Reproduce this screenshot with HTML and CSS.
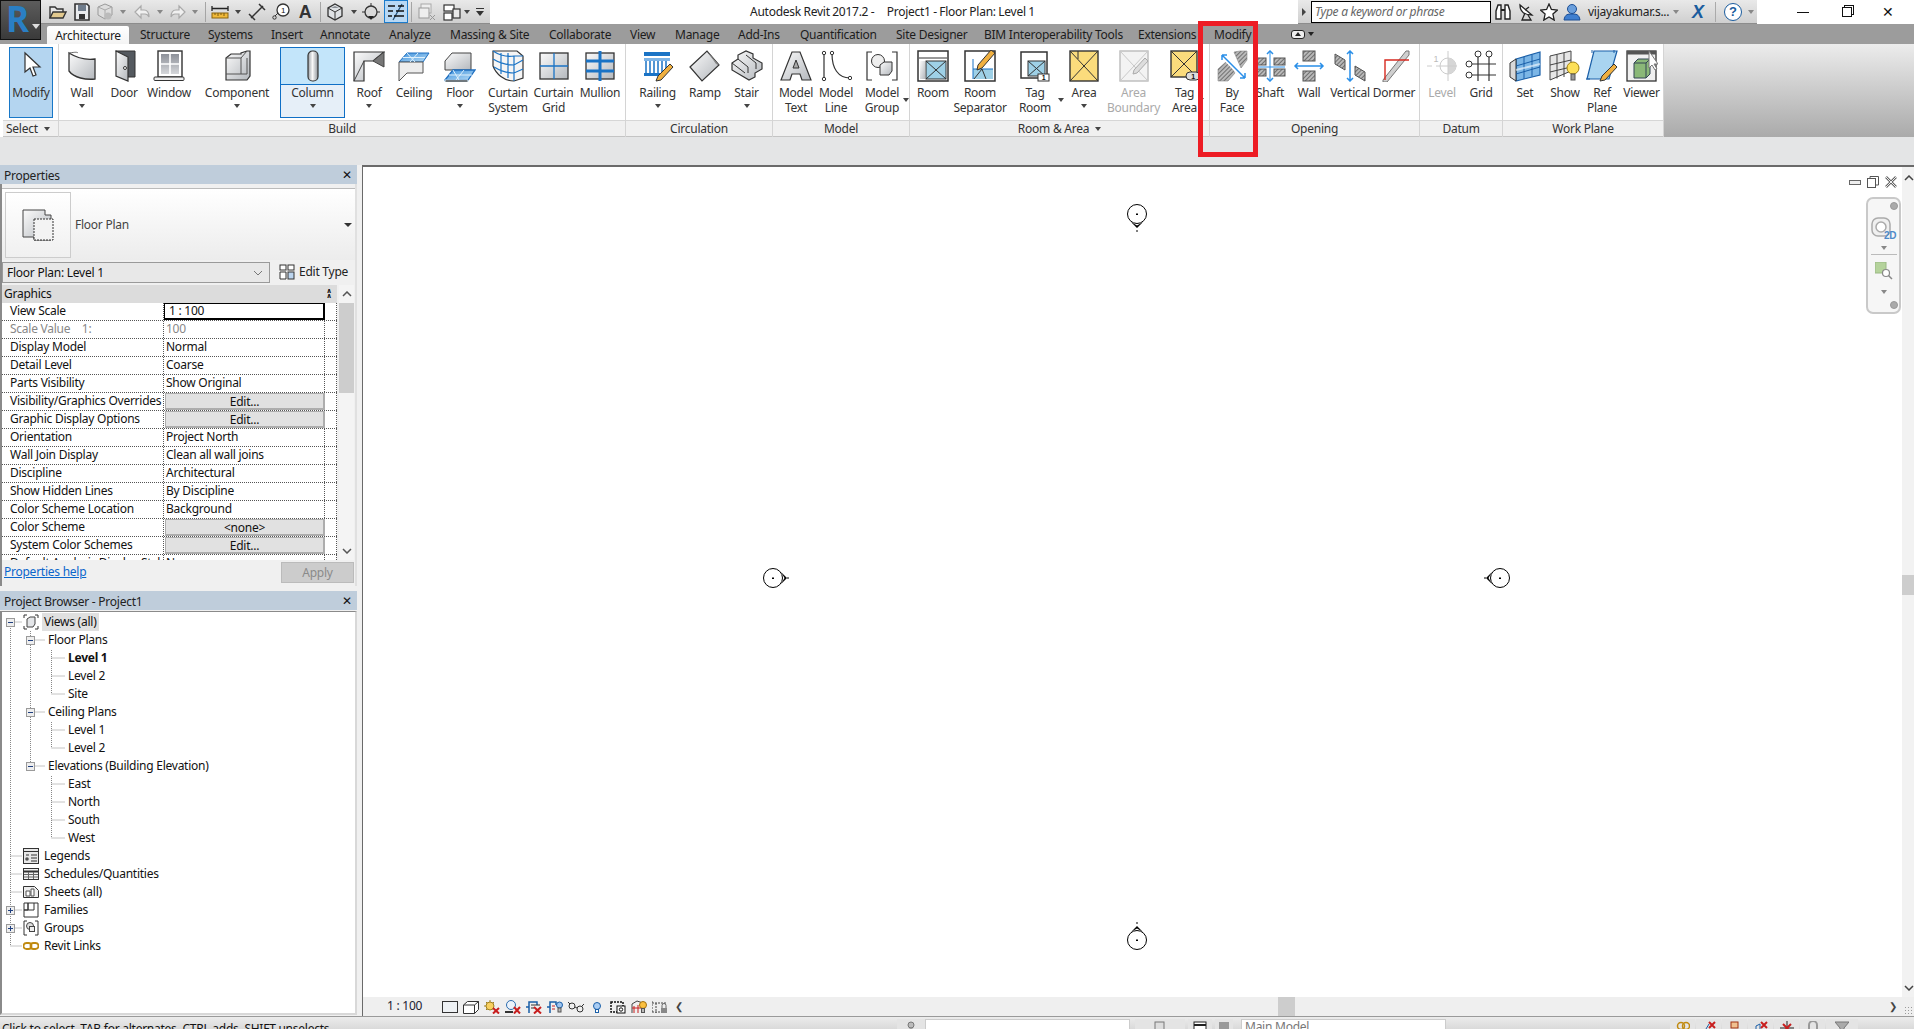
FILE: index.html
```html
<!DOCTYPE html>
<html lang="en">
<head>
<meta charset="utf-8">
<title>Autodesk Revit 2017.2 - Project1 - Floor Plan: Level 1</title>
<link rel="stylesheet" href="styles.css">
</head>
<body>
<svg class="defs" width="0" height="0" aria-hidden="true"><defs>
<linearGradient id="gW" x1="0" y1="0" x2="1" y2="1"><stop offset="0" stop-color="#fbfbfb"/><stop offset="1" stop-color="#b4b8bd"/></linearGradient>
<linearGradient id="gH" x1="0" y1="0" x2="1" y2="0"><stop offset="0" stop-color="#9aa0a6"/><stop offset=".45" stop-color="#f8f8f8"/><stop offset="1" stop-color="#8f959b"/></linearGradient>
<linearGradient id="gD" x1="0" y1="0" x2="0" y2="1"><stop offset="0" stop-color="#8d9199"/><stop offset="1" stop-color="#d5d7da"/></linearGradient>
<linearGradient id="gBl" x1="0" y1="0" x2="1" y2="1"><stop offset="0" stop-color="#3b8fdc"/><stop offset="1" stop-color="#b7dcf5"/></linearGradient>
<pattern id="hatch" width="3" height="3" patternUnits="userSpaceOnUse" patternTransform="rotate(45)"><rect width="3" height="3" fill="#b9b9b9"/><rect width="1" height="3" fill="#6f6f6f"/></pattern>
</defs></svg>

<div class="app">
<header class="titlebar">
  <div class="qat">
    <span class="q w24"><svg class="qi" viewBox="0 0 18 18"><path d="M1 15V4h5l2 2h6v3" fill="#e8e8e8" stroke="#333" stroke-width="1.4"/><path d="M1 15l3-6h13l-3 6z" fill="#e2c98e" stroke="#333" stroke-width="1.4"/></svg></span>
    <span class="q w24"><svg class="qi" viewBox="0 0 18 18"><path d="M2 1h12l2 2v14H2z" fill="#e9ebee" stroke="#333" stroke-width="1.6"/><rect x="5" y="2" width="8" height="6" fill="#6f7c8c"/><rect x="6" y="11" width="6" height="5" fill="#333"/></svg></span>
    <span class="q w22"><svg class="qi" viewBox="0 0 18 18"><path d="M9 1l7 3v8l-7 4-7-4V4z" fill="#ddd" stroke="#999"/><path d="M2 4l7 3 7-3M9 7v9" fill="none" stroke="#aaa"/><circle cx="12" cy="13" r="3.5" fill="#bbb"/></svg></span>
    <span class="q w14"><i class="arr dim"></i></span>
    <span class="q w24"><svg class="qi" viewBox="0 0 18 18"><path d="M8 3L2 9l6 6v-4h4c2 0 3 1 4 3 0-5-2-7-5-7H8z" fill="#f0f0f0" stroke="#aaa" stroke-width="1.2"/></svg></span>
    <span class="q w12"><i class="arr dim"></i></span>
    <span class="q w24"><svg class="qi" viewBox="0 0 18 18"><path d="M10 3l6 6-6 6v-4H6c-2 0-3 1-4 3 0-5 2-7 5-7h3z" fill="#f0f0f0" stroke="#aaa" stroke-width="1.2"/></svg></span>
    <span class="q w10"><i class="arr dim"></i></span>
    <span class="q w10"><i class="qsep"></i></span>
    <span class="q w20"><svg class="qi" viewBox="0 0 18 18"><path d="M1 3v5M17 3v5M1 5.500h16" fill="none" stroke="#222" stroke-width="1.3"/><rect x="1" y="10" width="16" height="5" fill="#f0b93a" stroke="#8a6410"/><path d="M4 10v2M7 10v3M10 10v2M13 10v3" stroke="#7a5a10"/></svg></span>
    <span class="q w16"><i class="arr"></i></span>
    <span class="q w22"><svg class="qi" viewBox="0 0 18 18"><path d="M3 15L15 3M1 11l6 6M11 1l6 6" fill="none" stroke="#333" stroke-width="1.5"/></svg></span>
    <span class="q w26"><svg class="qi" viewBox="0 0 18 18"><circle cx="11" cy="7" r="6" fill="#fff" stroke="#333" stroke-width="1.3"/><text x="11" y="10" class="qt">1</text><path d="M6 10l-3 3" stroke="#333"/><circle cx="2.500" cy="14.500" r="1.700" fill="none" stroke="#333"/></svg></span>
    <span class="q w22"><span class="bigA">A</span></span>
    <span class="q w8"><i class="qsep"></i></span>
    <span class="q w22"><svg class="qi" viewBox="0 0 18 18"><path d="M9 1l7 4v8l-7 4-7-4V5z" fill="#dfe2e5" stroke="#333" stroke-width="1.3"/><path d="M2 5l7 4 7-4M9 9v8" fill="none" stroke="#333"/><path d="M5 5l4-2 4 2" fill="#8a8f95"/></svg></span>
    <span class="q w16"><i class="arr"></i></span>
    <span class="q w18"><svg class="qi" viewBox="0 0 18 18"><path d="M0 9h3M15 9h3M9 0v3" stroke="#333"/><circle cx="9" cy="9" r="6" fill="#d9d9d9" stroke="#333" stroke-width="1.3"/><path d="M6 13l3 4 3-4z" fill="#222"/></svg></span>
    <span class="q w4"></span>
    <span class="q qon w24"><svg class="qi" viewBox="0 0 18 18"><path d="M15 1L6 17" stroke="#1f4e79" stroke-width="1.200"/><path d="M1 3h7M11 3h6M1 8h5M9 8h8M1 13h4M7 13h10" stroke="#111" stroke-width="1.600"/></svg></span>
    <span class="q w6"><i class="qsep"></i></span>
    <span class="q w26"><svg class="qi" viewBox="0 0 18 18"><rect x="3" y="1" width="10" height="9" fill="#eee" stroke="#aaa"/><rect x="1" y="5" width="10" height="10" fill="#eee" stroke="#999"/><path d="M12 12l5 5M17 12l-5 5" stroke="#999"/></svg></span>
    <span class="q w24"><svg class="qi" viewBox="0 0 18 18"><rect x="1" y="2" width="10" height="6" fill="#fff" stroke="#333" stroke-width="1.200"/><rect x="1" y="10" width="8" height="7" fill="#fff" stroke="#333" stroke-width="1.200"/><rect x="10" y="6" width="7" height="9" fill="#e9e9e9" stroke="#333" stroke-width="1.200"/></svg></span>
    <span class="q w6"><i class="arr"></i></span>
    <span class="q w20"><i class="cust"></i></span>
  </div>
  <div class="doc-title">Autodesk Revit 2017.2 -&nbsp;&nbsp;&nbsp;&nbsp; Project1 - Floor Plan: Level 1</div>
  <div class="infobar">
    <span class="play"></span>
    <span class="search">Type a keyword or phrase</span>
    <svg class="ib first" viewBox="0 0 18 18"><path d="M2 8l2-6h3v14H2zM16 8l-2-6h-3v14h5z" fill="#fff" stroke="#222" stroke-width="1.400"/><path d="M7 7h4" stroke="#222" stroke-width="2"/></svg>
    <svg class="ib" viewBox="0 0 18 18"><path d="M3 2c0 7 5 10 12 10z" fill="#fff" stroke="#222" stroke-width="1.300"/><path d="M8 10l-3 7h9l-3-5M8 7l4-3" fill="none" stroke="#222" stroke-width="1.300"/></svg>
    <svg class="ib" viewBox="0 0 18 18"><path d="M9 1l2.400 5.500 6 .6-4.500 4 1.300 6L9 14l-5.200 3.100 1.300-6-4.500-4 6-.6z" fill="#fff" stroke="#222" stroke-width="1.300"/></svg>
    <svg class="ib" viewBox="0 0 18 18"><circle cx="9" cy="6" r="4.500" fill="#6b9fdc" stroke="#1c4e94"/><path d="M1 17c1-6 4-6 8-6s7 0 8 6z" fill="#3f7fd0" stroke="#1c4e94"/></svg>
    <span class="user">vijayakumar.s...</span>
    <i class="arr dim u"></i>
    <span class="xlogo">X</span>
    <i class="vsep"></i>
    <span class="help">?</span>
    <i class="arr dim h"></i>
  </div>
  <div class="winctl">
    <span class="wmin"></span><span class="wres"></span><span class="wcls">&#10005;</span>
  </div>
</header>

<span class="rlogo"><span class="rletter">R</span><i class="rarr"></i></span>

<nav class="tabs">
  <span class="tab on">Architecture</span><span class="tab">Structure</span><span class="tab">Systems</span><span class="tab">Insert</span><span class="tab">Annotate</span><span class="tab">Analyze</span><span class="tab">Massing &amp; Site</span><span class="tab">Collaborate</span><span class="tab">View</span><span class="tab">Manage</span><span class="tab">Add-Ins</span><span class="tab">Quantification</span><span class="tab">Site Designer</span><span class="tab">BIM Interoperability Tools</span><span class="tab">Extensions</span><span class="tab">Modify</span><span class="tabmin"><i class="pill"></i><i class="arr"></i></span>
</nav>

<section class="ribbon">
  <div class="panel p-select">
    <div class="tools">
      <div class="tool modify">
        <svg class="ic" viewBox="0 0 32 32"><path d="M10 3v19l5-4 3 8 3-1-3-8h7z" fill="#fff" stroke="#333" stroke-width="1.200"/></svg>
        <span class="lb">Modify</span>
      </div>
    </div>
    <div class="plabel">Select<i class="arr"></i></div>
  </div>

  <div class="panel p-build">
    <div class="tools">
      <div class="tool"><svg class="ic" viewBox="0 0 32 32"><path d="M3 3c8 5 18 7 26 6v20C20 30 8 28 3 21z" fill="url(#gW)" stroke="#333" stroke-width="1.300"/><path d="M3 3c7-1 8-1 9 0" fill="none" stroke="#666"/></svg><span class="lb">Wall</span><i class="arr"></i></div>
      <div class="tool"><svg class="ic" viewBox="0 0 32 32"><path d="M8 1h19v26H20z" fill="#54595f" stroke="#333"/><path d="M8 1l12 6v24L8 26z" fill="url(#gW)" stroke="#333" stroke-width="1.200"/><circle cx="17" cy="18" r="1.500" fill="#fff" stroke="#333"/></svg><span class="lb">Door</span></div>
      <div class="tool"><svg class="ic" viewBox="0 0 32 32"><rect x="5" y="1" width="24" height="26" fill="#fff" stroke="#333" stroke-width="1.400"/><rect x="8" y="4" width="18" height="20" fill="url(#gD)"/><path d="M17 4v20M8 14h18" stroke="#fff" stroke-width="1.600"/><rect x="1" y="27" width="30" height="3.500" rx="1" fill="#eee" stroke="#333"/></svg><span class="lb">Window</span></div>
      <div class="tool"><svg class="ic" viewBox="0 0 32 32"><path d="M5 8l5-4h10v-1l6-2h3v25l-3 4H5z" fill="url(#gW)" stroke="#333" stroke-width="1.200"/><path d="M5 8h15v16H5M20 8l6-7M20 24h6v-16" fill="none" stroke="#555"/></svg><span class="lb">Component</span><i class="arr"></i></div>
      <div class="tool active"><svg class="ic" viewBox="0 0 32 32"><rect x="11" y="1" width="10" height="30" rx="4.500" fill="url(#gH)" stroke="#333" stroke-width="1.200"/></svg><span class="lb">Column</span><i class="arr"></i></div>
      <div class="tool"><svg class="ic" viewBox="0 0 32 32"><path d="M1 2h30L20 11v0H11v20H1z" fill="url(#gW)" stroke="#333" stroke-width="1.200"/><path d="M31 2v15L20 11zM1 31l10-20" fill="#777" stroke="#444"/></svg><span class="lb">Roof</span><i class="arr"></i></div>
      <div class="tool"><svg class="ic" viewBox="0 0 32 32"><path d="M1 12l8-9h22l-6 9z" fill="url(#gBl)" stroke="#1f6fc0"/><path d="M1 12h24v11H9L1 31z" fill="#ededed" stroke="#555"/><path d="M9 3l8 9M20 3l-8 9M5 7.500h22" stroke="#dff0fb"/></svg><span class="lb">Ceiling</span></div>
      <div class="tool"><svg class="ic" viewBox="0 0 32 32"><path d="M1 11l7-8h19v17H1z" fill="url(#gW)" stroke="#444"/><path d="M1 30l8-10h22l-7 10z" fill="url(#gBl)" stroke="#1f6fc0" stroke-width="1.300"/><path d="M1 30h23v2H1zM9 20l6 10M20 20l-8 10M5 25h23" stroke="#dff0fb"/></svg><span class="lb">Floor</span><i class="arr"></i></div>
      <div class="tool"><svg class="ic" viewBox="0 0 32 32"><path d="M1 1h24l6 5v22l-9 3c-10 0-18-7-21-15z" fill="#f5f5f5" stroke="#333" stroke-width="1.200"/><path d="M1 9c5 3 14 6 21 6l9-5M2 17c5 3 13 6 20 6l9-4M9 3v21M16 3v25M22 6v25M1 1c6 4 14 6 21 5l9 0" fill="none" stroke="#1a73c5" stroke-width="1.200"/></svg><span class="lb">Curtain<br>System</span></div>
      <div class="tool"><svg class="ic" viewBox="0 0 32 32"><rect x="2" y="3" width="28" height="26" fill="url(#gW)" stroke="#333" stroke-width="1.300"/><path d="M2 16h28M16 3v26" stroke="#1a73c5" stroke-width="1.300"/></svg><span class="lb">Curtain<br>Grid</span></div>
      <div class="tool"><svg class="ic" viewBox="0 0 32 32"><rect x="2" y="3" width="28" height="26" fill="url(#gW)" stroke="#333" stroke-width="1.300"/><path d="M2 11h28M2 21h28M16 1v30" stroke="#1a73c5" stroke-width="3"/></svg><span class="lb">Mullion</span></div>
    </div>
    <div class="plabel">Build</div>
  </div>

  <div class="panel p-circ">
    <div class="tools">
      <div class="tool"><svg class="ic" viewBox="0 0 32 32"><rect x="2" y="2" width="26" height="4" fill="#1a73c5"/><rect x="2" y="8" width="26" height="3" fill="#7db4e6"/><path d="M4 11v14M8 11v14M12 11v14M16 11v14M20 11v14M24 11v10" stroke="#1a73c5" stroke-width="1.500"/><rect x="2" y="23" width="20" height="3" fill="#1a73c5"/><path d="M28 14l3 3-12 13-5 1 2-5z" fill="#f0b040" stroke="#333"/></svg><span class="lb">Railing</span><i class="arr"></i></div>
      <div class="tool"><svg class="ic" viewBox="0 0 32 32"><path d="M1 17L18 1l12 14-17 16z" fill="url(#gW)" stroke="#333" stroke-width="1.200"/><path d="M18 1l12 14-3-1z" fill="#888"/></svg><span class="lb">Ramp</span></div>
      <div class="tool"><svg class="ic" viewBox="0 0 32 32"><path d="M1 13l6-4V5l8-4 7 3v4l9 5v6l-7 4v4l-6 3L1 20z" fill="url(#gW)" stroke="#333" stroke-width="1.200"/><path d="M7 9l10 8v6M15 5l10 8v6M1 13l13 10" fill="none" stroke="#333"/></svg><span class="lb">Stair</span><i class="arr"></i></div>
    </div>
    <div class="plabel">Circulation</div>
  </div>

  <div class="panel p-model">
    <div class="tools">
      <div class="tool"><svg class="ic" viewBox="0 0 32 32"><path d="M1 30L12 2h8l11 28h-9l-2-6h-8l-2 6z" fill="url(#gW)" stroke="#333" stroke-width="1.200"/><path d="M16 10l-3 8h6z" fill="#aaa" stroke="#333"/></svg><span class="lb">Model<br>Text</span></div>
      <div class="tool"><svg class="ic" viewBox="0 0 32 32"><path d="M4 4v24M12 4c0 14 6 24 18 24" fill="none" stroke="#333" stroke-width="1.200"/><circle cx="4" cy="3" r="1.700" fill="#fff" stroke="#333"/><circle cx="4" cy="29" r="1.700" fill="#fff" stroke="#333"/><circle cx="12" cy="3" r="1.700" fill="#fff" stroke="#333"/><circle cx="30" cy="28" r="1.700" fill="#fff" stroke="#333"/></svg><span class="lb">Model<br>Line</span></div>
      <div class="tool"><svg class="ic" viewBox="0 0 32 32"><path d="M6 2H1v28h5M26 2h5v28h-5" fill="none" stroke="#333" stroke-width="1.200"/><circle cx="12" cy="11" r="6.500" fill="#eee" stroke="#333"/><path d="M14 15l4-3h8v9l-3 4h-9z" fill="url(#gW)" stroke="#333"/></svg><span class="lb">Model<br>Group</span><i class="arr sd"></i></div>
    </div>
    <div class="plabel">Model</div>
  </div>

  <div class="panel p-room">
    <div class="tools">
      <div class="tool"><svg class="ic" viewBox="0 0 32 32"><rect x="1" y="1" width="30" height="30" fill="#fff" stroke="#333" stroke-width="1.500"/><rect x="9" y="11" width="20" height="18" fill="#9ed0e6" stroke="#333"/><path d="M9 11l20 18M29 11L9 29M2 8h28" stroke="#333"/><rect x="3" y="11" width="5" height="18" fill="url(#gW)"/></svg><span class="lb">Room</span></div>
      <div class="tool"><svg class="ic" viewBox="0 0 32 32"><rect x="1" y="1" width="30" height="30" fill="#fff" stroke="#333" stroke-width="1.500"/><rect x="9" y="19" width="20" height="10" fill="#9ed0e6"/><path d="M9 9v20M9 19h20" stroke="#1a73c5"/><path d="M10 29l8-10 4 10" fill="none" stroke="#333"/><path d="M27 0l4 3-13 15-5 2 1-5z" fill="#f0b040" stroke="#333"/></svg><span class="lb">Room<br>Separator</span></div>
      <div class="tool"><svg class="ic" viewBox="0 0 32 32"><rect x="2" y="2" width="26" height="26" fill="#fff" stroke="#333" stroke-width="1.500"/><rect x="9" y="11" width="17" height="15" fill="#9ed0e6" stroke="#333"/><path d="M9 11l17 15M26 11L9 26" stroke="#333"/><rect x="19" y="24" width="11" height="7" fill="#fff" stroke="#333"/><text x="24.500" y="30" class="mini">1</text></svg><span class="lb">Tag<br>Room</span><i class="arr sd"></i></div>
      <div class="tool"><svg class="ic" viewBox="0 0 32 32"><rect x="2" y="1" width="28" height="30" fill="#fbdc7c" stroke="#333" stroke-width="1.400"/><path d="M2 1l28 30M30 1L2 31" stroke="#333"/><path d="M10 1v8" stroke="#333"/></svg><span class="lb">Area</span><i class="arr"></i></div>
      <div class="tool off"><svg class="ic" viewBox="0 0 32 32"><rect x="2" y="1" width="28" height="30" fill="#f3f3f3" stroke="#bbb" stroke-width="1.400"/><path d="M2 1l28 30M30 1L2 31" stroke="#c9c9c9"/><path d="M27 8l3 3-11 12-4 1 1-4z" fill="#ddd" stroke="#aaa"/></svg><span class="lb">Area<br>Boundary</span></div>
      <div class="tool"><svg class="ic" viewBox="0 0 32 32"><rect x="2" y="1" width="26" height="26" fill="#fbdc7c" stroke="#333" stroke-width="1.400"/><path d="M2 1l26 26M28 1L2 27" stroke="#333"/><rect x="17" y="22" width="14" height="8" rx="4" fill="#ddd" stroke="#333"/><text x="24" y="29" class="mini">1</text></svg><span class="lb">Tag<br>Area</span><i class="arr sd"></i></div>
    </div>
    <div class="plabel">Room &amp; Area<i class="arr"></i></div>
  </div>

  <div class="panel p-open">
    <div class="tools">
      <div class="tool"><svg class="ic" viewBox="0 0 32 32"><path d="M18 2l6-1h7v9l-6 8z" fill="url(#hatch)" stroke="#888" stroke-width=".6"/><path d="M2 19L11 11l8 12-7 8H2z" fill="url(#hatch)" stroke="#888" stroke-width=".6"/><path d="M6 5l23 23" stroke="#fff" stroke-width="5"/><path d="M6 5l23 23M6 5h5M6 5v5M29 28h-5M29 28v-5" fill="none" stroke="#2a8fe8" stroke-width="1.500"/></svg><span class="lb">By<br>Face</span></div>
      <div class="tool"><svg class="ic" viewBox="0 0 32 32"><rect x="1" y="8" width="11" height="7" fill="url(#hatch)" stroke="#555"/><rect x="20" y="8" width="11" height="7" fill="url(#hatch)" stroke="#555"/><rect x="1" y="19" width="11" height="7" fill="url(#hatch)" stroke="#555"/><rect x="20" y="19" width="11" height="7" fill="url(#hatch)" stroke="#555"/><path d="M1 17h30M16 1v30" stroke="#2a8fe8"/><path d="M13 4l3-3 3 3M13 28l3 3 3-3" fill="none" stroke="#2a8fe8" stroke-width="1.500"/></svg><span class="lb">Shaft</span></div>
      <div class="tool"><svg class="ic" viewBox="0 0 32 32"><rect x="10" y="1" width="12" height="10" fill="url(#hatch)" stroke="#555"/><rect x="10" y="21" width="12" height="10" fill="url(#hatch)" stroke="#555"/><path d="M2 16h28M5 13l-3 3 3 3M27 13l3 3-3 3" fill="none" stroke="#2a8fe8" stroke-width="1.500"/></svg><span class="lb">Wall</span></div>
      <div class="tool"><svg class="ic" viewBox="0 0 32 32"><path d="M1 4l10 6v10L1 14zM21 16l10 6v9l-10-6z" fill="url(#hatch)" stroke="#555"/><path d="M16 1v30M13 4l3-3 3 3M13 28l3 3 3-3" fill="none" stroke="#2a8fe8" stroke-width="1.500"/></svg><span class="lb">Vertical</span></div>
      <div class="tool"><svg class="ic" viewBox="0 0 32 32"><path d="M5 30L28 1h3v4L9 32H5z" fill="#cfcfcf" stroke="#777"/><path d="M7 30V10h24" fill="none" stroke="#d62a20" stroke-width="1.400"/></svg><span class="lb">Dormer</span></div>
    </div>
    <div class="plabel">Opening</div>
  </div>

  <div class="panel p-datum">
    <div class="tools">
      <div class="tool off"><svg class="ic" viewBox="0 0 32 32"><path d="M1 16h5M10 16h4" stroke="#ccc"/><text x="10" y="12" class="mini gry">1</text><circle cx="22" cy="16" r="8" fill="#fff" stroke="#ccc"/><path d="M22 8a8 8 0 0 1 0 16zM14 16h8" fill="#d6d6d6"/><path d="M22 1v30M14 16h17" stroke="#ccc"/></svg><span class="lb">Level</span></div>
      <div class="tool"><svg class="ic" viewBox="0 0 32 32"><circle cx="13" cy="4" r="3" fill="#fff" stroke="#333"/><circle cx="24" cy="4" r="3" fill="#fff" stroke="#333"/><circle cx="4" cy="14" r="3" fill="#fff" stroke="#333"/><circle cx="4" cy="25" r="3" fill="#fff" stroke="#333"/><path d="M13 7v24M24 7v24M7 14h24M7 25h24" stroke="#333" stroke-width="1.200"/></svg><span class="lb">Grid</span></div>
    </div>
    <div class="plabel">Datum</div>
  </div>

  <div class="panel p-work">
    <div class="tools">
      <div class="tool"><svg class="ic" viewBox="0 0 32 32"><path d="M7 9L31 2v23L7 31z" fill="#7cb6e6" stroke="#1a5fa8" stroke-width="1.200"/><path d="M1 13l6-4v22l-6-4z" fill="#d9d9d9" stroke="#333"/><path d="M15 7v22M23 4.500v22M7 16l24-7M7 24l24-7" stroke="#1a5fa8"/><path d="M7 20l24-6" stroke="#fff" stroke-width="2" opacity=".6"/></svg><span class="lb">Set</span></div>
      <div class="tool"><svg class="ic" viewBox="0 0 32 32"><path d="M1 6L22 1v20L1 30z" fill="#e6e6e6" stroke="#444"/><path d="M8 4.500v24M15 3v24M1 15l21-5M1 22l21-5" stroke="#444"/><circle cx="24" cy="18" r="6" fill="#fde058" stroke="#a08010"/><rect x="22" y="24" width="4" height="6" fill="#999" stroke="#555"/></svg><span class="lb">Show</span></div>
      <div class="tool"><svg class="ic" viewBox="0 0 32 32"><path d="M8 1h23l-8 28H1z" fill="#a9d4f0" stroke="#1a5fa8" stroke-width="1.200"/><path d="M6 0v3M28 0v3M0 29h4" stroke="#1a5fa8"/><path d="M28 14l3 3-12 13-5 1 2-5z" fill="#f0b040" stroke="#333"/></svg><span class="lb">Ref<br>Plane</span></div>
      <div class="tool"><svg class="ic" viewBox="0 0 32 32"><rect x="1" y="1" width="29" height="30" fill="#f0f0f0" stroke="#333" stroke-width="1.300"/><rect x="1" y="1" width="29" height="3.500" fill="#555"/><path d="M8 13l4-4h12v15l-4 4H8z" fill="#8ab878" stroke="#345"/><path d="M8 13h12v15M20 13l4-4" fill="none" stroke="#345"/><path d="M23 1v17l3-3 3 5 2-1-3-5h4z" fill="#fff" stroke="#777"/></svg><span class="lb">Viewer</span></div>
    </div>
    <div class="plabel">Work Plane</div>
  </div>
</section>
<div class="optbar"></div>

<main class="main">
  <aside class="side">
    <div class="phead">Properties<span class="x">&#10005;</span></div>
    <div class="props">
      <div class="typesel">
        <span class="thumb"><svg width="32" height="32" viewBox="0 0 32 32"><path d="M1 1h22v5h6v25H12v-3H1z" fill="url(#gW)" stroke="#444"/><rect x="12" y="10" width="19" height="21" fill="#f3f3f3" stroke="#333" stroke-dasharray="2 1"/></svg></span>
        <span class="tname">Floor Plan</span>
        <i class="arr big"></i>
      </div>
      <div class="inst">
        <span class="combo">Floor Plan: Level 1<svg class="chev" viewBox="0 0 10 6"><path d="M1 1l4 4 4-4" fill="none" stroke="#777"/></svg></span>
        <span class="edittype"><svg width="16" height="16" viewBox="0 0 16 16"><rect x="1" y="1" width="6" height="5" fill="#fff" stroke="#333"/><rect x="9" y="1" width="6" height="5" fill="#fff" stroke="#333"/><path d="M1 8h6v7H1z" fill="#fff" stroke="#333"/><rect x="9" y="8" width="6" height="7" fill="#bcd5ef" stroke="#333"/></svg>Edit Type</span>
      </div>
      <div class="propgrid">
        <div class="pgmain">
          <div class="group">Graphics<span class="dbl">&#8743;<br>&#8743;</span></div>
          <div class="rows">
            <div class="row"><span>View Scale</span><span class="val focus">1 : 100</span></div>
            <div class="row muted"><span>Scale Value &nbsp;&nbsp;&nbsp;1:</span><span class="val">100</span></div>
            <div class="row"><span>Display Model</span><span class="val">Normal</span></div>
            <div class="row"><span>Detail Level</span><span class="val">Coarse</span></div>
            <div class="row"><span>Parts Visibility</span><span class="val">Show Original</span></div>
            <div class="row"><span>Visibility/Graphics Overrides</span><span class="val btn">Edit...</span></div>
            <div class="row"><span>Graphic Display Options</span><span class="val btn">Edit...</span></div>
            <div class="row"><span>Orientation</span><span class="val">Project North</span></div>
            <div class="row"><span>Wall Join Display</span><span class="val">Clean all wall joins</span></div>
            <div class="row"><span>Discipline</span><span class="val">Architectural</span></div>
            <div class="row"><span>Show Hidden Lines</span><span class="val">By Discipline</span></div>
            <div class="row"><span>Color Scheme Location</span><span class="val">Background</span></div>
            <div class="row"><span>Color Scheme</span><span class="val btn">&lt;none&gt;</span></div>
            <div class="row"><span>System Color Schemes</span><span class="val btn">Edit...</span></div>
            <div class="row"><span>Default Analysis Display Style</span><span class="val">None</span></div>
          </div>
        </div>
        <div class="pgscroll">
          <span class="sarrow"><svg width="10" height="6" viewBox="0 0 10 6"><path d="M1 5l4-4 4 4" fill="none" stroke="#555" stroke-width="1.500"/></svg></span>
          <span class="sthumb"></span>
          <span class="sarrow low"><svg width="10" height="6" viewBox="0 0 10 6"><path d="M1 1l4 4 4-4" fill="none" stroke="#555" stroke-width="1.500"/></svg></span>
        </div>
      </div>
      <div class="pfoot"><a class="plink">Properties help</a><span class="apply">Apply</span></div>
    </div>
    <div class="phead brow">Project Browser - Project1<span class="x">&#10005;</span></div>
    <div class="tree">
      <svg class="treelines" width="350" height="404" viewBox="0 0 350 404"><path d="M10.500 18V336M10.500 12H22M10.500 246H22M10.500 264H22M10.500 282H22M10.500 300H22M10.500 318H22M10.500 336H22M30.500 21V156M30.500 30H45M30.500 102H45M30.500 156H45M51.500 36V84M51.500 48H65M51.500 66H65M51.500 84H65M51.500 108V138M51.500 120H65M51.500 138H65M51.500 162V228M51.500 174H65M51.500 192H65M51.500 210H65M51.500 228H65" fill="none" stroke="#888" stroke-dasharray="1 1"/></svg>
      <div class="node l1"><i class="exp m"></i><svg class="ti" viewBox="0 0 16 16"><path d="M1 4V1h3M12 1h3v3M15 12v3h-3M4 15H1v-3" fill="none" stroke="#333"/><path d="M4 5l3-2h5v7l-2 3H4z" fill="#e4e6e9" stroke="#444"/></svg><span class="tx sel">Views (all)</span></div>
      <div class="node l2"><i class="exp m"></i><span class="tx">Floor Plans</span></div>
      <div class="node l3"><span class="tx b">Level 1</span></div>
      <div class="node l3"><span class="tx">Level 2</span></div>
      <div class="node l3"><span class="tx">Site</span></div>
      <div class="node l2"><i class="exp m"></i><span class="tx">Ceiling Plans</span></div>
      <div class="node l3"><span class="tx">Level 1</span></div>
      <div class="node l3"><span class="tx">Level 2</span></div>
      <div class="node l2"><i class="exp m"></i><span class="tx">Elevations (Building Elevation)</span></div>
      <div class="node l3"><span class="tx">East</span></div>
      <div class="node l3"><span class="tx">North</span></div>
      <div class="node l3"><span class="tx">South</span></div>
      <div class="node l3"><span class="tx">West</span></div>
      <div class="node l1"><svg class="ti" viewBox="0 0 16 16"><rect x=".5" y=".5" width="15" height="15" fill="#e8e8e8" stroke="#333"/><path d="M1 3.500h14M3 7h3M8 7h6M8 10h6M8 13h6" stroke="#333"/><circle cx="4" cy="11" r="1.800" fill="#555"/></svg><span class="tx">Legends</span></div>
      <div class="node l1"><svg class="ti" viewBox="0 0 16 16"><rect x=".5" y="2.500" width="15" height="11" fill="#f2f2f2" stroke="#333"/><path d="M1 5.500h14" stroke="#333" stroke-width="2"/><path d="M1 8.500h14M1 11h14M5.500 6v7M10.500 6v7" stroke="#666"/></svg><span class="tx">Schedules/Quantities</span></div>
      <div class="node l1"><svg class="ti" viewBox="0 0 16 16"><path d="M.5 2.500h11l4 4v7H.5z" fill="#eee" stroke="#333"/><path d="M3 7h4v5H3zM8 5h3v7H8z" fill="#fff" stroke="#555"/></svg><span class="tx">Sheets (all)</span></div>
      <div class="node l1"><i class="exp p"></i><svg class="ti" viewBox="0 0 16 16"><path d="M5 1h10v14H1V8h4z" fill="#fff" stroke="#333"/><path d="M1 1h4v7H1zM5 8h6V1" fill="none" stroke="#333"/></svg><span class="tx">Families</span></div>
      <div class="node l1"><i class="exp p"></i><svg class="ti" viewBox="0 0 16 16"><path d="M4 1H1v14h3M12 1h3v14h-3" fill="none" stroke="#333"/><circle cx="7" cy="6" r="3.500" fill="#ddd" stroke="#444"/><rect x="6.500" y="6.500" width="5" height="5" fill="#eee" stroke="#444"/></svg><span class="tx">Groups</span></div>
      <div class="node l1"><svg class="ti" viewBox="0 0 16 16"><rect x=".5" y="5" width="8" height="6" rx="3" fill="none" stroke="#c08a10" stroke-width="1.800"/><rect x="7.500" y="5" width="8" height="6" rx="3" fill="none" stroke="#c08a10" stroke-width="1.800"/></svg><span class="tx">Revit Links</span></div>
    </div>
  </aside>

  <section class="view">
    <div class="canvas">
      <div class="viewctl">
        <span class="vmin"></span>
        <svg width="12" height="12" viewBox="0 0 12 12"><rect x=".5" y="2.500" width="8" height="9" fill="#fff" stroke="#555"/><path d="M3 2V.5h8.500V9H9" fill="none" stroke="#555"/></svg>
        <svg width="12" height="12" viewBox="0 0 12 12"><path d="M1 1l10 10M11 1L1 11" stroke="#666" stroke-width="2.500"/><path d="M1 1l10 10M11 1L1 11" stroke="#eee"/></svg>
      </div>
      <div class="vscroll">
        <svg width="10" height="6" viewBox="0 0 10 6"><path d="M1 5l4-4 4 4" fill="none" stroke="#444" stroke-width="1.500"/></svg>
        <span class="vthumb"></span>
        <svg class="vdown" width="10" height="6" viewBox="0 0 10 6"><path d="M1 1l4 4 4-4" fill="none" stroke="#444" stroke-width="1.500"/></svg>
      </div>
      <div class="navbar">
        <span class="nb-close"></span>
        <svg class="nb-wheel" width="26" height="24" viewBox="0 0 26 24"><rect x="1" y="1" width="18" height="18" rx="6" fill="#f0f0f0" stroke="#aaa" stroke-width="1.500"/><circle cx="10" cy="10" r="5" fill="#fff" stroke="#aaa" stroke-width="1.500"/><text x="13" y="22" class="t2d">2D</text></svg>
        <i class="arr dim"></i>
        <span class="nb-sep"></span>
        <svg class="nb-zoom" width="18" height="18" viewBox="0 0 18 18"><rect x="0" y="0" width="11" height="11" fill="#b5d39c" stroke="#9ab884"/><circle cx="11" cy="11" r="3.500" fill="#fff" stroke="#888" stroke-width="1.200"/><path d="M13.500 13.500L17 17" stroke="#888" stroke-width="1.500"/></svg>
        <i class="arr dim"></i>
        <span class="nb-min"></span>
      </div>
      <svg class="marker m-n" width="26" height="32" viewBox="0 0 26 32"><circle cx="13" cy="10" r="9.500" fill="#fff" stroke="#000"/><rect x="12" y="9.500" width="2" height="1.500"/><path d="M7 18l6 3.500 6-3.500-6 6z"/><path d="M13 26v2" stroke="#000"/></svg>
      <svg class="marker m-w" width="32" height="26" viewBox="0 0 32 26"><circle cx="10" cy="13" r="9.500" fill="#fff" stroke="#000"/><rect x="9" y="12.500" width="2" height="1.500"/><path d="M18 7l3.500 6-3.500 6 6-6z"/><path d="M24 13h2" stroke="#000"/></svg>
      <svg class="marker m-e" width="32" height="26" viewBox="0 0 32 26"><circle cx="22" cy="13" r="9.500" fill="#fff" stroke="#000"/><rect x="21" y="12.500" width="2" height="1.500"/><path d="M14 7l-3.500 6 3.500 6-6-6z"/><path d="M8 13H6" stroke="#000"/></svg>
      <svg class="marker m-s" width="26" height="32" viewBox="0 0 26 32"><circle cx="13" cy="22" r="9.500" fill="#fff" stroke="#000"/><rect x="12" y="21.500" width="2" height="1.500"/><path d="M7 14l6-3.500 6 3.500-6-6z"/><path d="M13 6V4" stroke="#000"/></svg>
    </div>
    <div class="viewbar">
      <span class="scale">1 : 100</span>
      <span class="vbi"><svg viewBox="0 0 16 14"><rect x=".5" y="1.500" width="15" height="11" fill="#eef1f4" stroke="#333"/></svg></span>
      <span class="vbi"><svg viewBox="0 0 16 14"><path d="M.5 5l4-3.500h11v8l-4 4H.5z" fill="#fff" stroke="#333"/><path d="M.5 5h11v8.500M11.500 5l4-3.500" fill="none" stroke="#333"/></svg></span>
      <span class="vbi"><svg viewBox="0 0 16 14"><circle cx="6" cy="6" r="4" fill="#f8d060" stroke="#a08020"/><path d="M6 0v2M0 6h2M2 2l1 1M10 2L9 3M2 10l1-1" stroke="#a08020"/><path d="M9 8l6 5.500M15 8l-6 5.500" stroke="#c81e1e" stroke-width="2"/></svg></span>
      <span class="vbi"><svg viewBox="0 0 16 14"><circle cx="6" cy="5" r="4.500" fill="#eaf2fb" stroke="#2a6cb0"/><path d="M0 12h8" stroke="#333" stroke-width="2"/><path d="M9 7l6 6.500M15 7l-6 6.500" stroke="#c81e1e" stroke-width="2"/></svg></span>
      <span class="vbi"><svg viewBox="0 0 16 14"><path d="M0 7h3V2h8v3M3 7v6" fill="none" stroke="#1a5fa8" stroke-width="1.500"/><path d="M5 5h9M5 8h3" stroke="#333"/><path d="M8 7l7 6.500M15 7l-7 6.500" stroke="#c81e1e" stroke-width="2"/></svg></span>
      <span class="vbi"><svg viewBox="0 0 16 14"><path d="M0 7h3V2h6v3M3 7v6" fill="none" stroke="#1a5fa8" stroke-width="1.500"/><path d="M5 6h3M5 9h3" stroke="#c81e1e"/><circle cx="12.500" cy="5" r="3" fill="#9cc4f0" stroke="#1a5fa8"/><rect x="11" y="8" width="3" height="4" fill="#bbb" stroke="#555"/></svg></span>
      <span class="vbi"><svg viewBox="0 0 16 14"><circle cx="4" cy="6" r="3" fill="none" stroke="#333"/><circle cx="12" cy="9" r="3" fill="none" stroke="#333"/><path d="M0 2l2 2M7 7l2 1M14 6l2-2" stroke="#333"/></svg></span>
      <span class="vbi"><svg viewBox="0 0 16 14"><circle cx="8" cy="6" r="3.500" fill="#a9cdf4" stroke="#1a5fa8"/><rect x="6.500" y="9.500" width="3" height="3" fill="#fff" stroke="#1a5fa8"/></svg></span>
      <span class="vbi"><svg viewBox="0 0 16 14"><path d="M1 2h12v10H1z" fill="none" stroke="#111" stroke-width="1.500" stroke-dasharray="2 1"/><rect x="7" y="6" width="8" height="7" fill="#fff" stroke="#111"/><circle cx="11" cy="9.500" r="1.700" fill="none" stroke="#111"/></svg></span>
      <span class="vbi"><svg viewBox="0 0 16 14"><path d="M1 13V4l5-3 6 2v3" fill="none" stroke="#444"/><path d="M3 13V6M7 13V5M1 8h9" stroke="#c81e1e"/><circle cx="12" cy="5" r="3.500" fill="#fbc040" stroke="#a07010"/><rect x="10.500" y="8.500" width="3" height="4" fill="#bbb" stroke="#555"/></svg></span>
      <span class="vbi"><svg viewBox="0 0 16 14"><path d="M0 1v12M0 3h15M4 3v10M0 12h8" fill="none" stroke="#444" stroke-dasharray="2 1"/><path d="M10 8V5.500a2 2 0 0 1 4 0V8" fill="none" stroke="#666"/><rect x="9" y="8" width="6" height="5" fill="#888"/></svg></span>
      <span class="hl">&#10094;</span>
      <span class="hthumb"></span>
      <span class="hr">&#10095;</span>
      <i class="grip"></i>
    </div>
  </section>
</main>

<footer class="status">
  <span class="stext">Click to select, TAB for alternates, CTRL adds, SHIFT unselects.</span>
  <span class="sbox s1"><svg width="14" height="14" viewBox="0 0 14 14"><circle cx="7" cy="4" r="3" fill="#bbb" stroke="#777"/><path d="M2 13c0-4 3-5 5-5s5 1 5 5z" fill="#ccc" stroke="#777"/></svg></span>
  <span class="sinput"></span>
  <span class="sbox s2"><svg width="14" height="14" viewBox="0 0 14 14"><rect x="2" y="1" width="9" height="8" fill="#ddd" stroke="#777"/></svg></span>
  <span class="sbox s3"><svg width="14" height="14" viewBox="0 0 14 14"><rect x="1" y="1" width="12" height="12" fill="#fff" stroke="#222"/><path d="M1 4h12" stroke="#222" stroke-width="2"/></svg></span>
  <span class="sbox s4"><svg width="14" height="14" viewBox="0 0 14 14"><rect x="2" y="1" width="10" height="12" fill="#999"/></svg></span>
  <span class="sinput main-model">Main Model</span>
  <span class="sicons">
    <span class="sbox s5"><svg width="14" height="14" viewBox="0 0 14 14"><circle cx="5" cy="5" r="3.500" fill="none" stroke="#c08a10" stroke-width="1.500"/><circle cx="10" cy="5" r="3.500" fill="none" stroke="#c08a10" stroke-width="1.500"/></svg></span>
    <span class="sbox s5"><svg width="14" height="14" viewBox="0 0 14 14"><path d="M1 13L7 3" stroke="#1a5fa8"/><path d="M7 1l6 6M13 1L7 7" stroke="#c81e1e" stroke-width="2"/></svg></span>
    <span class="sbox s5"><svg width="14" height="14" viewBox="0 0 14 14"><rect x="3" y="1" width="7" height="6" fill="#f0c090" stroke="#a03010"/></svg></span>
    <span class="sbox s5"><svg width="14" height="14" viewBox="0 0 14 14"><path d="M2 13V5l4-2v10" fill="none" stroke="#1a5fa8"/><path d="M7 1l6 6M13 1L7 7" stroke="#c81e1e" stroke-width="2"/></svg></span>
    <span class="sbox s5"><svg width="14" height="14" viewBox="0 0 14 14"><path d="M7 0v14M0 7h14" stroke="#222"/><path d="M3 3l8 8M11 3l-8 8" stroke="#c81e1e" stroke-width="2"/></svg></span>
    <span class="sbox s5"><svg width="14" height="14" viewBox="0 0 14 14"><path d="M3 13V4a4 4 0 0 1 8 0v9" fill="none" stroke="#999" stroke-width="2"/></svg></span>
    <span class="sbox s5 f"><svg width="14" height="14" viewBox="0 0 14 14"><path d="M0 1h14l-5 6v6H5V7z" fill="#aaa" stroke="#777"/></svg></span>
  </span>
</footer>

<span class="redbox"></span>
</div>
</body>
</html>
```
FILE: styles.css
```css
* { box-sizing: border-box; }
html, body { margin: 0; padding: 0; }
body { width: 1914px; height: 1029px; overflow: hidden; background: #f0f0f0; color: #111; font: 12px/16px "Noto Sans", "Open Sans", sans-serif; letter-spacing: -0.25px; }
.defs { position: absolute; }
i { display: block; font-style: normal; }
.app { position: relative; width: 1914px; height: 1029px; overflow: hidden; }

/* small drop arrows */
.arr { width: 0; height: 0; border-left: 3.5px solid transparent; border-right: 3.5px solid transparent; border-top: 4px solid #444; }
.arr.dim { border-top-color: #888; }

/* title bar */
.titlebar { height: 24px; display: flex; background: #fff; }
.qat { width: 490px; height: 24px; flex: none; display: flex; align-items: center; padding-left: 46px; background: linear-gradient(#e9e9e9, #cfcfcf); border-bottom: 1px solid #8c8c8c; }
.q { display: flex; align-items: center; justify-content: center; height: 23px; flex: none; }
.w4 { width: 4px; } .w6 { width: 6px; } .w8 { width: 8px; } .w10 { width: 10px; } .w12 { width: 12px; } .w14 { width: 14px; } .w16 { width: 16px; } .w18 { width: 18px; } .w20 { width: 20px; } .w22 { width: 22px; } .w24 { width: 24px; } .w26 { width: 26px; }
.qi { width: 18px; height: 18px; display: block; }
.qt { font: 8px "Liberation Sans", sans-serif; text-anchor: middle; fill: #111; }
.qsep { width: 1px; height: 20px; background: #a5a5a5; }
.qon { background: #b8d8f4; border: 1px solid #1c7ccc; }
.bigA { font: bold 18px/18px "Liberation Sans", sans-serif; color: #333; }
.cust { width: 8px; height: 7px; border-top: 1px solid #333; position: relative; }
.cust::after { content: ""; position: absolute; left: 0; top: 2px; border-left: 4px solid transparent; border-right: 4px solid transparent; border-top: 5px solid #333; }
.doc-title { width: 808px; flex: none; padding-left: 260px; line-height: 24px; color: #222; white-space: nowrap; word-spacing: -0.4px; }
.infobar { width: 459px; height: 24px; flex: none; display: flex; align-items: center; background: linear-gradient(#e9e9e9, #cfcfcf); border-bottom: 1px solid #8c8c8c; position: relative; }
.play { width: 0; height: 0; margin-left: 4px; border-left: 4px solid #444; border-top: 4px solid transparent; border-bottom: 4px solid transparent; }
.search { width: 180px; height: 22px; margin-left: 5px; background: #fff; border: 1px solid #000; font-style: italic; color: #666; padding-left: 3px; line-height: 20px; flex: none; }
.ib { width: 18px; height: 18px; margin-left: 5px; flex: none; }
.ib.first { margin-left: 3px; }
.user { margin-left: 4px; color: #222; white-space: nowrap; width: 88px; overflow: hidden; padding-left: 3px; }
.arr.u { margin-left: 0; }
.xlogo { margin-left: 13px; font: bold italic 18px/18px "Liberation Sans", sans-serif; color: #1a5c9e; }
.vsep { width: 1px; height: 20px; background: #aaa; margin-left: 11px; }
.help { width: 18px; height: 18px; margin-left: 8px; border: 1.500px solid #1a5c9e; border-radius: 50%; color: #1a5c9e; font: bold 13px/15px "Liberation Sans", sans-serif; text-align: center; background: #fff; }
.arr.h { margin-left: 6px; }
.winctl { flex: 1; display: flex; align-items: center; padding-left: 40px; gap: 0; }
.wmin { width: 12px; height: 1px; background: #111; margin-right: 33px; }
.wres { width: 10px; height: 10px; border: 1px solid #111; box-shadow: 2px -2px 0 -1px #fff, 2px -2px 0 0 #111; background: #fff; margin-right: 30px; }
.wcls { font: 14px/14px "DejaVu Sans", sans-serif; color: #111; }

/* application button */
.rlogo { position: absolute; left: 0; top: 0; width: 41px; height: 40px; background: linear-gradient(#5c5c5c, #3a3a3a); border: 1px solid #111; display: block; }
.rletter { position: absolute; left: 5px; top: 0; font: bold 35px/36px "Open Sans", sans-serif; color: #2a7fc4; }
.rarr { position: absolute; left: 31px; top: 23px; width: 0; height: 0; border-left: 4px solid transparent; border-right: 4px solid transparent; border-top: 5px solid #ddd; }

/* tabs */
.tabs { height: 20px; background: #9c9c9c; display: grid; grid-template-columns: 82px 68px 63px 49px 69px 61px 99px 81px 45px 63px 62px 96px 88px 154px 76px 57px 60px; padding-left: 47px; }
.tab { padding-left: 11px; line-height: 22px; color: #1c1c1c; white-space: nowrap; overflow: hidden; }
.tab.on { background: linear-gradient(#fff, #f4f4f4); padding: 0; text-align: center; border-radius: 2px 2px 0 0; margin-top: 2px; line-height: 19px; }
.tabmin { display: flex; align-items: center; gap: 3px; padding-left: 31px; }
.pill { width: 14px; height: 9px; border: 1px solid #222; border-radius: 3px; background: #eee; position: relative; }
.pill::after { content: ""; position: absolute; left: 3px; top: 1px; border-left: 3px solid transparent; border-right: 3px solid transparent; border-bottom: 4px solid #222; }
.tabmin .arr { border-top-color: #222; }

/* ribbon */
.ribbon { height: 93px; display: grid; grid-template-columns: 56px 567px 147px 137px 300px 210px 83px 161px; padding-left: 3px; background: linear-gradient(#ececec, #aaa) 1664px 0 no-repeat, #fff; background-size: 250px 93px, auto; }
.panel { display: flex; flex-direction: column; background: #fff; border-right: 1px solid #d4d4d4; padding-left: 1px; }
.tools { height: 76px; display: grid; }
.plabel { height: 17px; background: #f0f0f0; border-top: 1px solid #d6d6d6; border-bottom: 1px solid #c4c4c4; text-align: center; color: #333; line-height: 15px; display: flex; justify-content: center; align-items: center; gap: 6px; margin-left: -1px; }
.p-select .plabel { justify-content: flex-start; padding-left: 3px; }
.p-select .tools { grid-template-columns: 50px; }
.p-build { padding-left: 0; }
.p-circ { padding-left: 0; }
.p-build .plabel, .p-circ .plabel { margin-left: 0; }
.p-build .tools { grid-template-columns: 46px 38px 52px 84px 66px 48px 42px 50px 46px 45px 48px; }
.p-circ .tools { grid-template-columns: 63px 32px 51px; }
.p-model .tools { grid-template-columns: 44px 36px 56px; }
.p-room .tools { grid-template-columns: 44px 50px 60px 38px 61px 41px; }
.p-open .tools { grid-template-columns: 42px 34px 44px 38px 50px; }
.p-datum .tools { grid-template-columns: 42px 36px; }
.p-work .tools { grid-template-columns: 42px 38px 36px 43px; }
.tool { display: flex; flex-direction: column; align-items: center; padding-top: 6px; position: relative; color: #333; }
.ic { width: 32px; height: 32px; flex: none; display: block; }
.lb { margin-top: 3px; line-height: 15px; text-align: center; white-space: nowrap; }
.tool > .arr { margin-top: 4px; border-top-color: #444; }
.tool > .arr.sd { position: absolute; right: 1px; top: 54px; margin: 0; }
.tool.off .lb { color: #aaa; }
.tool.active { margin-top: 3px; height: 71px; padding-top: 2px; border: 1px solid #0f6fc6; background: linear-gradient(#c3e5fa 0, #c3e5fa 36px, #0f6fc6 36px, #0f6fc6 37px, #e6eff8 37px); margin-left: 1px; }
.tool.active .lb { margin-top: 3px; }
.tool.modify { margin: 3px 0 0 5px; width: 44px; height: 71px; padding-top: 2px; border: 1px solid #1878c8; background: #b4d5f0; }
.tool.modify .lb { margin-top: 3px; }
.mini { font: bold 7px "Liberation Sans", sans-serif; text-anchor: middle; fill: #111; }
.mini.gry { fill: #bbb; font-weight: normal; font-size: 9px; }
.optbar { height: 28px; background: #e4e5e6; }

/* main area */
.main { height: 852px; display: flex; border-bottom: 1px solid #9a9a9a; background: #f0f0f0; }
.side { width: 362px; flex: none; padding-right: 5px; }
.phead { height: 19px; background: #bfcddb; color: #222; padding-left: 4px; line-height: 21px; display: flex; justify-content: space-between; overflow: hidden; }
.x { width: 16px; margin-right: 2px; font: bold 12px/20px "DejaVu Sans", sans-serif; color: #111; text-align: center; }
.props { height: 402px; border-left: 2px solid #8a8a8a; border-right: 2px solid #e0e0e0; padding-top: 4px; background: #f0f0f0; }
.typesel { height: 72px; display: flex; align-items: center; border-top: 1px solid #bbb; background: linear-gradient(#fff, #ececec); padding-left: 3px; }
.thumb { width: 66px; height: 66px; display: flex; align-items: center; justify-content: center; border: 1px solid #ccc; background: linear-gradient(#fff, #f0f0f0); flex: none; }
.tname { margin-left: 4px; color: #444; flex: 1; }
.arr.big { border-left-width: 4px; border-right-width: 4px; border-top-width: 4px; border-top-color: #333; margin-right: 3px; }
.inst { height: 23px; margin-top: 2px; display: flex; }
.combo { width: 268px; height: 21px; background: #e8e8e8; border: 1px solid #9a9a9a; padding-left: 4px; line-height: 19px; display: flex; align-items: center; justify-content: space-between; }
.chev { width: 10px; height: 6px; margin-right: 6px; }
.edittype { margin-left: 9px; display: flex; align-items: center; gap: 4px; height: 19px; color: #222; white-space: nowrap; }
.propgrid { display: grid; grid-template-columns: 335px 15px; column-gap: 2px; height: 275px; }
.group { height: 18px; background: #dcdcdc; padding-left: 2px; line-height: 18px; display: flex; justify-content: space-between; position: relative; }
.dbl { width: 16px; font: bold 7px/5px "DejaVu Sans", sans-serif; padding-top: 4px; text-align: center; }
.rows { height: 257px; overflow: hidden; background: #fff; }
.row { display: grid; grid-template-columns: 162px 161px 12px; height: 18px; border-bottom: 1px dotted #555; line-height: 16px; white-space: nowrap; }
.row > span:first-child { padding-left: 8px; overflow: hidden; border-right: 1px dotted #555; }
.val { padding-left: 2px; border-right: 1px dotted #555; position: relative; }
.row::after { content: ""; border-right: 1px dotted #555; }
.row.muted { color: #888; }
.val.focus { border: 1px solid #000; border-width: 1px 2px 2px 1px; line-height: 14px; padding-left: 4px; height: 17px; }
.val.btn { background: #e1e1e1; border: 2px solid #adadad; border-width: 1px 2px 2px 1px; text-align: center; padding: 0; line-height: 15px; height: 17px; margin: 0 0 0 1px; }
.pgscroll { display: flex; flex-direction: column; background: #f4f4f4; }
.sarrow { height: 18px; display: flex; align-items: center; justify-content: center; flex: none; }
.sarrow.low { margin-top: auto; }
.sthumb { height: 90px; background: #cdcdcd; flex: none; }
.pfoot { height: 26px; display: flex; justify-content: space-between; align-items: center; padding: 0 1px 2px 2px; background: #f0f0f0; }
.plink { color: #0a66cc; text-decoration: underline; }
.apply { width: 73px; height: 21px; background: #ccc; border: 1px solid #bbb; text-align: center; line-height: 20px; color: #8a8a8a; }
.brow { margin-top: 5px; }
.tree { position: relative; height: 404px; margin-top: 1px; border: 2px solid #8a8a8a; border-width: 1px 2px 2px 2px; border-right-color: #d8d8d8; border-bottom-color: #d8d8d8; background: #fff; padding-top: 1px; overflow: hidden; }
.treelines { position: absolute; left: -2px; top: -2px; }
.node { position: relative; height: 18px; display: flex; align-items: center; white-space: nowrap; }
.l1 { padding-left: 19px; }
.l2 { padding-left: 44px; }
.l3 { padding-left: 64px; }
.exp { position: absolute; width: 9px; height: 9px; background: #eee; border: 1px solid #9a9a9a; top: 5px; }
.l1 .exp { left: 4px; }
.l2 .exp { left: 24px; }
.exp::after { content: ""; position: absolute; left: 1px; top: 3px; width: 5px; height: 1px; background: #1f3f7f; }
.exp.p::before { content: ""; position: absolute; left: 3px; top: 1px; width: 1px; height: 5px; background: #1f3f7f; }
.ti { width: 16px; height: 16px; margin-left: 2px; margin-right: 3px; flex: none; position: relative; }
.tx { padding: 0 2px; height: 18px; line-height: 18px; position: relative; background: #fff; }
.tx.sel { background: #e0e0e0; }
.tx.b { font-weight: 700; }

/* canvas */
.view { flex: 1; display: flex; flex-direction: column; border-top: 2px solid #6a6a6a; border-left: 1px solid #6a6a6a; }
.canvas { flex: 1; position: relative; background: #fff; }
.viewctl { position: absolute; right: 17px; top: 9px; display: flex; align-items: center; gap: 6px; }
.vmin { width: 12px; height: 5px; border: 1px solid #666; background: #eee; }
.vscroll { position: absolute; right: 0; top: 0; width: 12px; height: 100%; background: #f2f2f2; }
.vscroll svg { position: absolute; left: 2px; top: 8px; }
.vscroll svg.vdown { top: auto; bottom: 6px; }
.vthumb { position: absolute; left: 0; top: 408px; width: 12px; height: 20px; background: #cdcdcd; }
.navbar { position: absolute; right: 13px; top: 30px; width: 35px; height: 117px; border: 2px solid #c9c9c9; border-radius: 7px; background: #f6f6f6; display: flex; flex-direction: column; align-items: center; }
.nb-close, .nb-min { position: absolute; right: 1px; width: 8px; height: 8px; border-radius: 50%; background: #aaa; border: 1px solid #999; }
.nb-close { top: 3px; }
.nb-min { bottom: 3px; }
.nb-wheel { margin-top: 18px; margin-left: 1px; }
.navbar .arr { margin-top: 5px; }
.navbar .arr + .nb-sep { margin-top: 4px; }
.nb-sep { width: 26px; height: 1px; background: #bbb; flex: none; }
.nb-zoom { margin-top: 7px; }
.navbar .nb-zoom + .arr { margin-top: 10px; }
.t2d { font: bold 10px "Liberation Sans", sans-serif; fill: #4f8ac8; }
.marker { position: absolute; display: block; }
.m-n { left: 761px; top: 37px; }
.m-s { left: 761px; top: 751px; }
.m-w { left: 400px; top: 398px; }
.m-e { left: 1115px; top: 398px; }
.viewbar { height: 19px; flex: none; background: #efefef; display: flex; align-items: center; position: relative; }
.scale { width: 76px; padding-left: 24px; color: #223; flex: none; line-height: 16px; margin-top: -2px; white-space: nowrap; }
.vbi { width: 21px; height: 19px; display: flex; align-items: center; justify-content: center; flex: none; margin-right: 0; }
.vbi svg { width: 16px; height: 14px; }
.hl { margin-left: 5px; font: 10px/19px "DejaVu Sans", sans-serif; color: #444; }
.hthumb { position: absolute; left: 915px; top: 0; width: 17px; height: 19px; background: #cdcdcd; }
.hr { position: absolute; left: 1526px; top: 0; font: 10px/19px "DejaVu Sans", sans-serif; color: #444; }
.grip { position: absolute; right: 2px; bottom: 2px; width: 8px; height: 8px; background: radial-gradient(circle, #999 1px, transparent 1px) 0 0 / 3px 3px; }

/* status bar */
.status { height: 12px; background: linear-gradient(#ececec, #dadada); display: flex; overflow: hidden; padding-top: 2px; position: relative; }
.stext { width: 897px; flex: none; padding-left: 2px; line-height: 16px; white-space: nowrap; color: #111; margin-top: 2px; }
.sbox { display: flex; justify-content: center; padding-top: 2px; background: #e4e4e4; height: 16px; flex: none; }
.s1 { width: 28px; }
.s2 { width: 50px; margin-left: 5px; }
.s3 { width: 24px; margin-left: 3px; }
.s4 { width: 18px; margin-left: 3px; }
.s5 { width: 25px; margin-right: 1px; }
.s5.f { width: 32px; }
.sinput { width: 205px; height: 16px; background: #fff; border: 1px solid #ccc; flex: none; color: #777; padding-left: 3px; line-height: 14px; }
.main-model { margin-left: 8px; }
.sicons { display: flex; margin-left: 224px; }

/* annotation */
.redbox { position: absolute; left: 1198px; top: 21px; width: 60px; height: 136px; border: 5px solid #ed1c24; }
```
